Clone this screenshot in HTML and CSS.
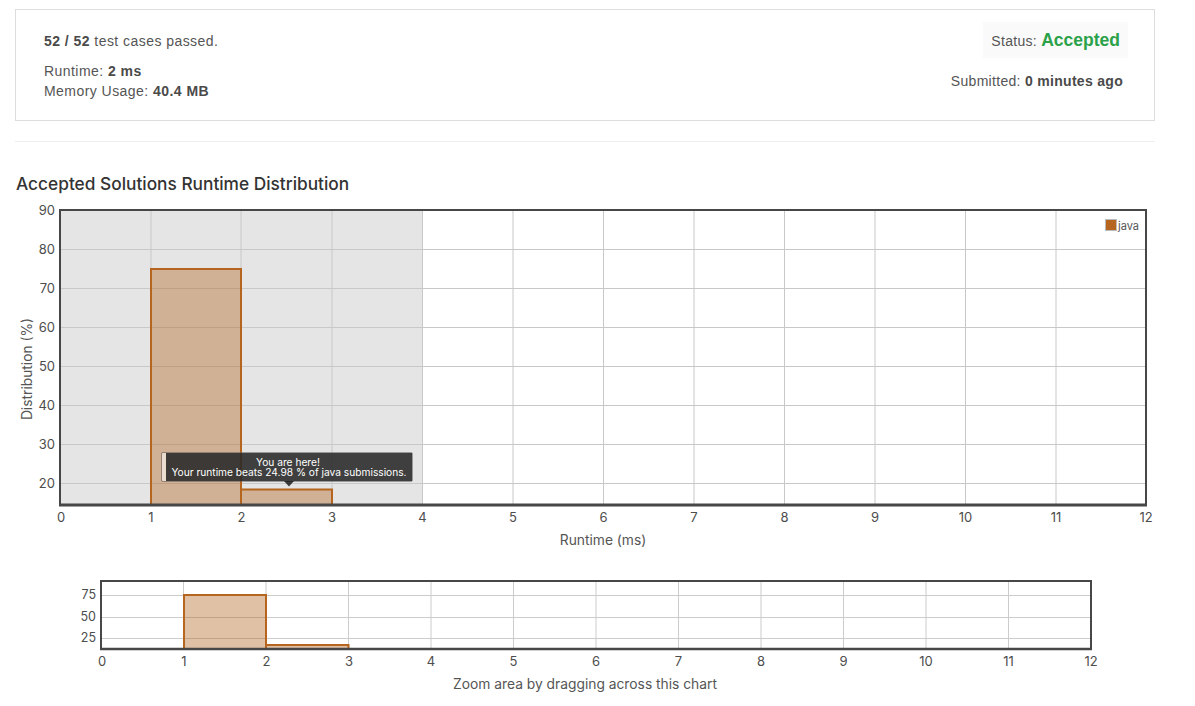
FILE: index.html
```html
<!DOCTYPE html>
<html>
<head>
<meta charset="utf-8">
<link rel="stylesheet" href="styles.css">
</head>
<body>
<div class="page">
  <div class="result-card">
    <div class="result-left">
      <div class="line first"><b>52 / 52</b> test cases passed.</div>
      <div class="line">Runtime: <b>2 ms</b></div>
      <div class="line">Memory Usage: <b>40.4 MB</b></div>
    </div>
    <div class="result-right">
      <div class="status-box">Status: <span class="accepted">Accepted</span></div>
      <div class="submitted">Submitted: <b>0 minutes ago</b></div>
    </div>
  </div>
  <hr class="divider">
  <h3 class="chart-title">Accepted Solutions Runtime Distribution</h3>

  <svg class="main-chart" width="1150" height="360" viewBox="15 200 1150 360" xmlns="http://www.w3.org/2000/svg">
    <rect x="60" y="211" width="362" height="295" fill="#e5e5e5"/>
    <g stroke="#c8c8c8" stroke-width="1">
      <line x1="151" y1="211" x2="151" y2="506"/>
      <line x1="241" y1="211" x2="241" y2="506"/>
      <line x1="332" y1="211" x2="332" y2="506"/>
      <line x1="422.5" y1="211" x2="422.5" y2="506"/>
      <line x1="513" y1="211" x2="513" y2="506"/>
      <line x1="603.5" y1="211" x2="603.5" y2="506"/>
      <line x1="694" y1="211" x2="694" y2="506"/>
      <line x1="784.5" y1="211" x2="784.5" y2="506"/>
      <line x1="875" y1="211" x2="875" y2="506"/>
      <line x1="965.5" y1="211" x2="965.5" y2="506"/>
      <line x1="1056" y1="211" x2="1056" y2="506"/>
      <line x1="60" y1="484.5" x2="1146" y2="484.5"/>
      <line x1="60" y1="445.5" x2="1146" y2="445.5"/>
      <line x1="60" y1="406.5" x2="1146" y2="406.5"/>
      <line x1="60" y1="367.5" x2="1146" y2="367.5"/>
      <line x1="60" y1="328.5" x2="1146" y2="328.5"/>
      <line x1="60" y1="289.5" x2="1146" y2="289.5"/>
      <line x1="60" y1="250.5" x2="1146" y2="250.5"/>
    </g>
    <g fill="rgba(181,101,29,0.4)" stroke="#b5651d" stroke-width="2">
      <rect x="151" y="270" width="90" height="236"/>
      <rect x="241" y="490.5" width="91" height="15.5"/>
    </g>
    <rect x="60" y="211" width="1086" height="295" fill="none" stroke="#474747" stroke-width="2"/>
    <line x1="59" y1="506" x2="1147" y2="506" stroke="#474747" stroke-width="3"/>

    <g class="tick" text-anchor="end">
      <text x="55" y="215.5">90</text>
      <text x="55" y="254.5">80</text>
      <text x="55" y="293.5">70</text>
      <text x="55" y="332.5">60</text>
      <text x="55" y="371.5">50</text>
      <text x="55" y="410.5">40</text>
      <text x="55" y="449.5">30</text>
      <text x="55" y="488.5">20</text>
    </g>
    <g class="tick" text-anchor="middle">
      <text x="61" y="523">0</text>
      <text x="151" y="523">1</text>
      <text x="241.5" y="523">2</text>
      <text x="332" y="523">3</text>
      <text x="422.5" y="523">4</text>
      <text x="513" y="523">5</text>
      <text x="603.5" y="523">6</text>
      <text x="694" y="523">7</text>
      <text x="784.5" y="523">8</text>
      <text x="875" y="523">9</text>
      <text x="965.5" y="523">10</text>
      <text x="1056" y="523">11</text>
      <text x="1146" y="523">12</text>
    </g>
    <text class="axis-title" x="603" y="545.5" text-anchor="middle">Runtime (ms)</text>
    <text class="axis-title" x="0" y="0" text-anchor="middle" transform="translate(32 370) rotate(-90)">Distribution (%)</text>

    <rect x="1105.5" y="220.5" width="11" height="11" fill="#b5651d" stroke="#bbbbbb" stroke-width="1"/>
    <text class="legend" x="1118" y="230.5">java</text>

    <rect x="161.5" y="453.5" width="251" height="29" fill="rgba(255,255,255,0.55)" stroke="rgba(0,0,0,0.35)" stroke-width="1" rx="1.5"/>
    <rect x="166" y="454" width="246" height="28" fill="rgba(0,0,0,0.74)"/>
    <polygon points="284,482 294,482 289,487.5" fill="rgba(0,0,0,0.74)"/>
    <text class="tip" x="288" y="466.5" text-anchor="middle">You are here!</text>
    <text class="tip" x="289" y="477" text-anchor="middle">Your runtime beats 24.98 % of java submissions.</text>
  </svg>

  <svg class="mini-chart" width="1150" height="130" viewBox="15 570 1150 130" xmlns="http://www.w3.org/2000/svg">
    <g stroke="#cccccc" stroke-width="1">
      <line x1="183.5" y1="582" x2="183.5" y2="650"/>
      <line x1="266" y1="582" x2="266" y2="650"/>
      <line x1="348.5" y1="582" x2="348.5" y2="650"/>
      <line x1="431" y1="582" x2="431" y2="650"/>
      <line x1="513.5" y1="582" x2="513.5" y2="650"/>
      <line x1="596" y1="582" x2="596" y2="650"/>
      <line x1="678.5" y1="582" x2="678.5" y2="650"/>
      <line x1="761" y1="582" x2="761" y2="650"/>
      <line x1="843.5" y1="582" x2="843.5" y2="650"/>
      <line x1="926" y1="582" x2="926" y2="650"/>
      <line x1="1008.5" y1="582" x2="1008.5" y2="650"/>
      <line x1="101" y1="596.5" x2="1091" y2="596.5"/>
      <line x1="101" y1="618.5" x2="1091" y2="618.5"/>
      <line x1="101" y1="639.5" x2="1091" y2="639.5"/>
    </g>
    <g fill="rgba(181,101,29,0.4)" stroke="#b5651d" stroke-width="2">
      <rect x="184" y="596" width="82" height="54"/>
      <rect x="266" y="646" width="82.5" height="4"/>
    </g>
    <rect x="101" y="582" width="990" height="68" fill="none" stroke="#474747" stroke-width="2"/>
    <line x1="100" y1="650" x2="1092" y2="650" stroke="#474747" stroke-width="2.5"/>
    <g class="tick small" text-anchor="end">
      <text x="96" y="600">75</text>
      <text x="96" y="622">50</text>
      <text x="96" y="643">25</text>
    </g>
    <g class="tick" text-anchor="middle">
      <text x="102" y="667">0</text>
      <text x="184" y="667">1</text>
      <text x="266.5" y="667">2</text>
      <text x="349" y="667">3</text>
      <text x="431" y="667">4</text>
      <text x="513.5" y="667">5</text>
      <text x="596" y="667">6</text>
      <text x="678.5" y="667">7</text>
      <text x="761" y="667">8</text>
      <text x="843.5" y="667">9</text>
      <text x="926" y="667">10</text>
      <text x="1008.5" y="667">11</text>
      <text x="1091" y="667">12</text>
    </g>
    <text class="axis-title" x="585" y="690" text-anchor="middle">Zoom area by dragging across this chart</text>
  </svg>
</div>
</body>
</html>
```

FILE: styles.css
```css
html, body {
  margin: 0;
  padding: 0;
  background: #ffffff;
}

body {
  font-family: "Liberation Sans", Arial, Helvetica, sans-serif;
  color: #555555;
}

.page {
  padding: 9px 40px 0 15px;
}

.result-card {
  width: 1138px;
  height: 110px;
  border: 1px solid #dddddd;
  display: flex;
  justify-content: space-between;
  align-items: flex-start;
}

.result-left {
  padding: 21px 0 0 28px;
  font-size: 14px;
  letter-spacing: 0.45px;
}

.result-left .line {
  line-height: 20px;
  height: 20px;
}

.result-left .line.first {
  margin-bottom: 10px;
}

.result-left b,
.result-right b {
  color: #4a4a4a;
}

.result-right {
  padding: 12px 26px 0 0;
  display: flex;
  flex-direction: column;
  align-items: flex-end;
  font-size: 14px;
  letter-spacing: 0.3px;
}

.status-box {
  height: 36px;
  line-height: 36px;
  padding: 0 8px;
  background: #fafafa;
}

.accepted {
  color: #2ba249;
  font-size: 17.5px;
  font-weight: bold;
  letter-spacing: 0;
}

.submitted {
  margin-top: 13px;
  line-height: 20px;
  padding-right: 5px;
}

.divider {
  width: 1140px;
  margin: 20px 0 0 0;
  border: 0;
  border-top: 1px solid #eeeeee;
  height: 0;
}

.chart-title {
  margin: 32px 0 0 1px;
  font-family: Inter, "Liberation Sans", sans-serif;
  font-weight: 500;
  font-size: 17.3px;
  line-height: 20px;
  color: #333333;
}

.main-chart {
  display: block;
  margin: 5px 0 0 0;
}

.mini-chart {
  display: block;
  margin: 10px 0 0 0;
}

.tick text {
  font-family: Inter, "Liberation Sans", sans-serif;
  font-size: 13px;
  fill: #4d4d4d;
}

.tick.small text {
  font-size: 12.5px;
}

.axis-title {
  font-family: Inter, "Liberation Sans", sans-serif;
  font-size: 13.8px;
  fill: #555555;
}

.legend {
  font-family: Inter, "Liberation Sans", sans-serif;
  font-size: 11px;
  fill: #555555;
}

.tip {
  font-family: Inter, "Liberation Sans", sans-serif;
  font-size: 10.2px;
  fill: #ffffff;
}
```
